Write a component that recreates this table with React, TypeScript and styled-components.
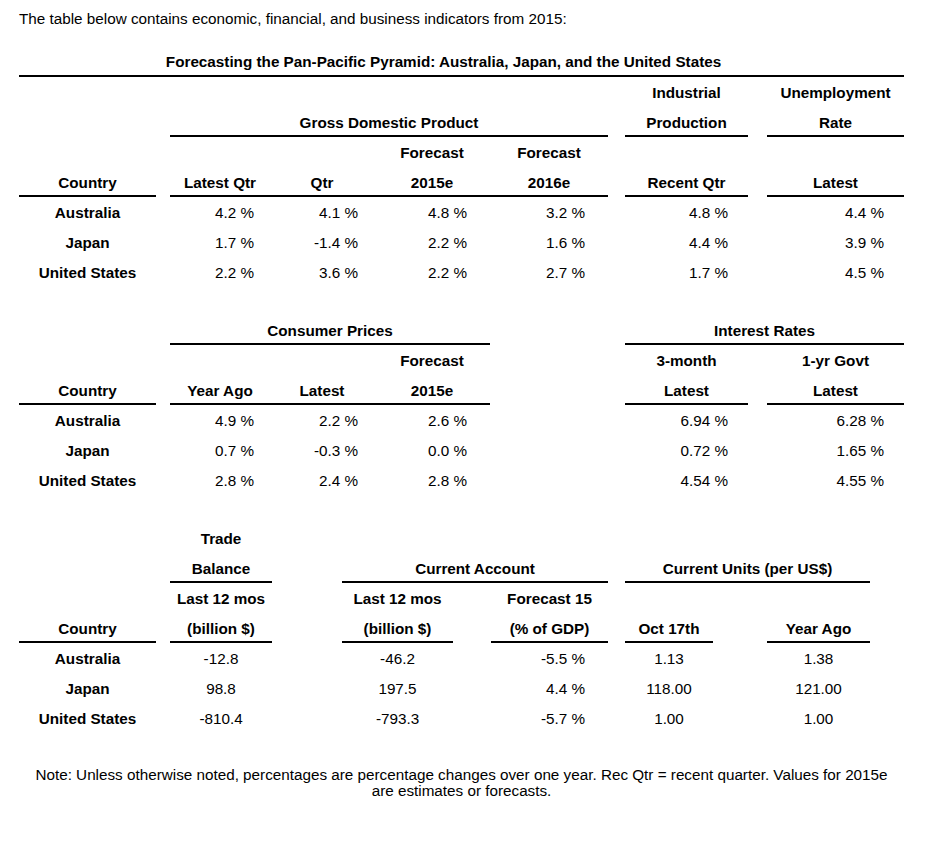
import React from "react";
import styled, { createGlobalStyle } from "styled-components";

const Global = createGlobalStyle`
  html, body { margin: 0; padding: 0; background: #ffffff; }
  body {
    font-family: "Liberation Sans", Arial, sans-serif;
    font-size: 15.25px;
    color: #000000;
  }
`;

const Page = styled.div`
  padding: 10px 0 40px 19px;
  width: 885px;
`;

const Intro = styled.p`
  margin: 0;
  line-height: 18px;
`;

const Table = styled.div<{ $cols: string; $mt: number }>`
  display: grid;
  grid-template-columns: ${(p) => p.$cols};
  grid-auto-rows: 30px;
  margin-top: ${(p) => p.$mt}px;
  width: max-content;
`;

type Place = { $c: number; $r: number; $s?: number };

const Title = styled.div<Place>`
  grid-column: ${(p) => p.$c} / span ${(p) => p.$s ?? 1};
  grid-row: ${(p) => p.$r};
  box-sizing: border-box;
  border-bottom: 2px solid #000;
  display: flex;
  align-items: center;
  justify-content: center;
  padding-right: 36px;
  font-weight: 700;
  white-space: nowrap;
`;

const Head = styled.div<Place & { $line?: boolean }>`
  grid-column: ${(p) => p.$c} / span ${(p) => p.$s ?? 1};
  grid-row: ${(p) => p.$r};
  box-sizing: border-box;
  padding-top: 2px;
  border-bottom: 2px solid ${(p) => (p.$line ? "#000" : "transparent")};
  display: flex;
  align-items: center;
  justify-content: center;
  font-weight: 700;
  white-space: nowrap;
`;

const Country = styled.div<Place>`
  grid-column: ${(p) => p.$c};
  grid-row: ${(p) => p.$r};
  display: flex;
  align-items: center;
  justify-content: center;
  font-weight: 700;
  white-space: nowrap;
`;

const Value = styled.div<Place & { $pr?: number; $center?: boolean }>`
  grid-column: ${(p) => p.$c};
  grid-row: ${(p) => p.$r};
  display: flex;
  align-items: center;
  justify-content: ${(p) => (p.$center ? "center" : "flex-end")};
  padding-right: ${(p) => (p.$center ? 0 : p.$pr ?? 20)}px;
  white-space: nowrap;
`;

const Note = styled.p`
  margin: 34px 0 0 0;
  text-align: center;
  line-height: 16px;
`;

const COLS_A = "137px 14px 100px 104px 116px 118px 17px 123px 19px 137px";
const COLS_B = "137px 14px 102px 70px 111px 38px 117px 17px 88px 54px 103px";

const countries = ["Australia", "Japan", "United States"];

type ColSpec = { c: number; pr?: number; center?: boolean };

const gdpCols: ColSpec[] = [
  { c: 3, pr: 16 },
  { c: 4, pr: 16 },
  { c: 5, pr: 23 },
  { c: 6, pr: 23 },
  { c: 8, pr: 20 },
  { c: 10, pr: 20 },
];
const gdpData = [
  ["4.2 %", "4.1 %", "4.8 %", "3.2 %", "4.8 %", "4.4 %"],
  ["1.7 %", "-1.4 %", "2.2 %", "1.6 %", "4.4 %", "3.9 %"],
  ["2.2 %", "3.6 %", "2.2 %", "2.7 %", "1.7 %", "4.5 %"],
];

const cpiCols: ColSpec[] = [
  { c: 3, pr: 16 },
  { c: 4, pr: 16 },
  { c: 5, pr: 23 },
  { c: 8, pr: 20 },
  { c: 10, pr: 20 },
];
const cpiData = [
  ["4.9 %", "2.2 %", "2.6 %", "6.94 %", "6.28 %"],
  ["0.7 %", "-0.3 %", "0.0 %", "0.72 %", "1.65 %"],
  ["2.8 %", "2.4 %", "2.8 %", "4.54 %", "4.55 %"],
];

const tradeCols: ColSpec[] = [
  { c: 3, center: true },
  { c: 5, center: true },
  { c: 7, pr: 23 },
  { c: 9, center: true },
  { c: 11, center: true },
];
const tradeData = [
  ["-12.8", "-46.2", "-5.5 %", "1.13", "1.38"],
  ["98.8", "197.5", "4.4 %", "118.00", "121.00"],
  ["-810.4", "-793.3", "-5.7 %", "1.00", "1.00"],
];

function DataRows({ first, cols, data }: { first: number; cols: ColSpec[]; data: string[][] }) {
  return (
    <>
      {countries.map((name, i) => (
        <React.Fragment key={name}>
          <Country $c={1} $r={first + i}>
            {name}
          </Country>
          {cols.map((col, j) => (
            <Value key={j} $c={col.c} $r={first + i} $pr={col.pr} $center={col.center}>
              {data[i][j]}
            </Value>
          ))}
        </React.Fragment>
      ))}
    </>
  );
}

export default function App() {
  return (
    <>
      <Global />
      <Page>
        <Intro>The table below contains economic, financial, and business indicators from 2015:</Intro>

        <Table $cols={COLS_A} $mt={19}>
          <Title $c={1} $s={10} $r={1}>
            Forecasting the Pan-Pacific Pyramid: Australia, Japan, and the United States
          </Title>
          <Head $c={8} $r={2}>Industrial</Head>
          <Head $c={10} $r={2}>Unemployment</Head>
          <Head $c={3} $s={4} $r={3} $line>Gross Domestic Product</Head>
          <Head $c={8} $r={3} $line>Production</Head>
          <Head $c={10} $r={3} $line>Rate</Head>
          <Head $c={5} $r={4}>Forecast</Head>
          <Head $c={6} $r={4}>Forecast</Head>
          <Head $c={1} $r={5} $line>Country</Head>
          <Head $c={3} $r={5} $line>Latest Qtr</Head>
          <Head $c={4} $r={5} $line>Qtr</Head>
          <Head $c={5} $r={5} $line>2015e</Head>
          <Head $c={6} $r={5} $line>2016e</Head>
          <Head $c={8} $r={5} $line>Recent Qtr</Head>
          <Head $c={10} $r={5} $line>Latest</Head>
          <DataRows first={6} cols={gdpCols} data={gdpData} />
        </Table>

        <Table $cols={COLS_A} $mt={28}>
          <Head $c={3} $s={3} $r={1} $line>Consumer Prices</Head>
          <Head $c={8} $s={3} $r={1} $line>Interest Rates</Head>
          <Head $c={5} $r={2}>Forecast</Head>
          <Head $c={8} $r={2}>3-month</Head>
          <Head $c={10} $r={2}>1-yr Govt</Head>
          <Head $c={1} $r={3} $line>Country</Head>
          <Head $c={3} $r={3} $line>Year Ago</Head>
          <Head $c={4} $r={3} $line>Latest</Head>
          <Head $c={5} $r={3} $line>2015e</Head>
          <Head $c={8} $r={3} $line>Latest</Head>
          <Head $c={10} $r={3} $line>Latest</Head>
          <DataRows first={4} cols={cpiCols} data={cpiData} />
        </Table>

        <Table $cols={COLS_B} $mt={28}>
          <Head $c={3} $r={1}>Trade</Head>
          <Head $c={3} $r={2} $line>Balance</Head>
          <Head $c={5} $s={3} $r={2} $line>Current Account</Head>
          <Head $c={9} $s={3} $r={2} $line>Current Units (per US$)</Head>
          <Head $c={3} $r={3}>Last 12 mos</Head>
          <Head $c={5} $r={3}>Last 12 mos</Head>
          <Head $c={7} $r={3}>Forecast 15</Head>
          <Head $c={1} $r={4} $line>Country</Head>
          <Head $c={3} $r={4} $line>(billion $)</Head>
          <Head $c={5} $r={4} $line>(billion $)</Head>
          <Head $c={7} $r={4} $line>(% of GDP)</Head>
          <Head $c={9} $r={4} $line>Oct 17th</Head>
          <Head $c={11} $r={4} $line>Year Ago</Head>
          <DataRows first={5} cols={tradeCols} data={tradeData} />
        </Table>

        <Note>
          Note: Unless otherwise noted, percentages are percentage changes over one year. Rec Qtr = recent quarter. Values for 2015e
          <br />
          are estimates or forecasts.
        </Note>
      </Page>
    </>
  );
}
